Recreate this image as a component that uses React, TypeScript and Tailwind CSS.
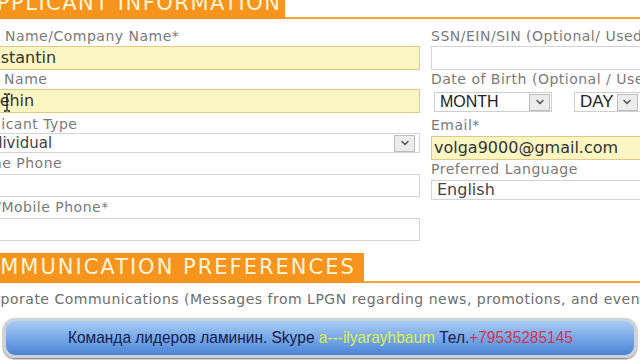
import { ChevronDown } from 'lucide-react';

const verdana = { fontFamily: '"DejaVu Sans", Verdana, sans-serif' };
const arial = { fontFamily: '"Liberation Sans", Arial, sans-serif' };

function Label({ text, className = '' }: { text: string; className?: string }) {
  return (
    <div className={`h-4 text-[14px] leading-4 tracking-[0.5px] text-[#7a7a7a] whitespace-nowrap ${className}`}>{text}</div>
  );
}

function Input({ value = '', yellow = false, className = '' }: { value?: string; yellow?: boolean; className?: string }) {
  return (
    <div
      className={`flex items-center pl-[2px] whitespace-nowrap text-[16px] text-[#333] border ${
        yellow ? 'bg-[#fbf6c2] border-[#e5c886]' : 'bg-white border-[#d4d4d4]'
      } ${className}`}
    >
      {value}
    </div>
  );
}

function Arrow({ className = '' }: { className?: string }) {
  return (
    <div className={`flex items-center justify-center w-[21px] h-[17px] shrink-0 bg-[#ececec] border border-[#bdbdbd] ${className}`}>
      <ChevronDown className="h-3 w-3 text-[#555]" strokeWidth={3} />
    </div>
  );
}

function Header({ text, width, indent }: { text: string; width: string; indent: string }) {
  return (
    <div className="flex items-end">
      <div className={`h-[30px] ${width} bg-[#f7941e] flex items-center overflow-hidden`}>
        <span className={`text-[21px] text-[#fff6d8] whitespace-nowrap ${indent}`}>{text}</span>
      </div>
      <div className="flex-1 h-[2px] bg-[#f3a43e]" />
    </div>
  );
}

export default function App() {
  return (
    <div className="relative w-[640px] h-[360px] overflow-hidden bg-white" style={verdana}>
      <div className="-mt-[11px]">
        <Header text="APPLICANT INFORMATION" width="w-[285px]" indent="-ml-[19px] tracking-[1.5px]" />
      </div>

      <div className="flex pt-[9px]">
        <div className="w-[452px] -ml-[32px] shrink-0 flex flex-col">
          <Label text="First Name/Company Name*" />
          <Input value="Konstantin" yellow className="mt-[2px] h-6" />
          <Label text="Last Name" className="mt-[1px]" />
          <Input value="Lepehin" yellow className="mt-[2px] h-6" />
          <Label text="Applicant Type" className="mt-[3px]" />
          <div className="mt-[1px] h-5 flex items-center justify-between bg-white border border-[#d4d4d4] pl-[10px] pr-[4px] text-[15px] text-[#444]">
            <span>Individual</span>
            <Arrow />
          </div>
          <Label text="Home Phone" className="mt-[2px]" />
          <Input className="mt-[3px] h-[23px]" />
          <Label text="Cell/Mobile Phone*" className="mt-[2px]" />
          <Input className="mt-[3px] h-[23px]" />
        </div>

        <div className="ml-[11px] w-[240px] shrink-0 flex flex-col">
          <Label text="SSN/EIN/SIN (Optional/ Used for tax purposes)" />
          <Input className="mt-[2px] h-6" />
          <Label text="Date of Birth (Optional / Used for verification)" className="mt-[1px]" />
          <div className="mt-[5px] flex items-center">
            <div className="ml-[3px] w-[118px] h-5 flex items-center justify-between bg-white border border-[#cfcfcf] pl-[5px] pr-[1px] text-[16px] text-[#222]" style={arial}>
              <span>MONTH</span>
              <Arrow />
            </div>
            <div className="ml-[22px] w-[80px] h-5 flex items-center gap-[3px] bg-white border border-[#cfcfcf] pl-[5px] text-[17px] text-[#222]" style={arial}>
              <span>DAY</span>
              <Arrow />
            </div>
          </div>
          <Label text="Email*" className="mt-[5px]" />
          <Input value="volga9000@gmail.com" yellow className="mt-[3px] h-6" />
          <Label text="Preferred Language" className="mt-[1px]" />
          <div className="mt-[3px] h-5 flex items-center bg-white border border-[#d4d4d4] pl-[5px] text-[16px] text-[#444]">
            English
          </div>
        </div>
      </div>

      <div className="mt-[12px]">
        <Header text="COMMUNICATION PREFERENCES" width="w-[364px]" indent="-ml-[35px] tracking-[2px]" />
      </div>
      <div className="mt-[8px] -ml-[25px] text-[14px] leading-4 tracking-[0.5px] text-[#6e6e6e] whitespace-nowrap">
        Corporate Communications (Messages from LPGN regarding news, promotions, and events)
      </div>

      <div className="absolute left-[3px] top-[318px] w-[634px] h-[40px] rounded-[12px] border-[3px] border-[#cdd2d9] bg-gradient-to-b from-[#a9cdf4] via-[#78a8e8] to-[#4a84d6] flex items-center justify-center shadow-[0_1px_2px_rgba(0,0,0,0.6)]">
        <span className="text-[17px] text-[#14204a] whitespace-nowrap scale-x-[0.91]" style={arial}>
          Команда лидеров ламинин. Skype <span className="text-[#dff04a]">a---ilyarayhbaum</span> Тел.<span className="text-[#d2344e]">+79535285145</span>
        </span>
      </div>

      <svg className="absolute left-[3px] top-[93px]" width="8" height="19" viewBox="0 0 8 19">
        <path d="M1 1h2.5M4.5 1H7M4 1.5v16M1 18h2.5M4.5 18H7" stroke="#111" strokeWidth="1.3" fill="none" />
      </svg>
    </div>
  );
}
